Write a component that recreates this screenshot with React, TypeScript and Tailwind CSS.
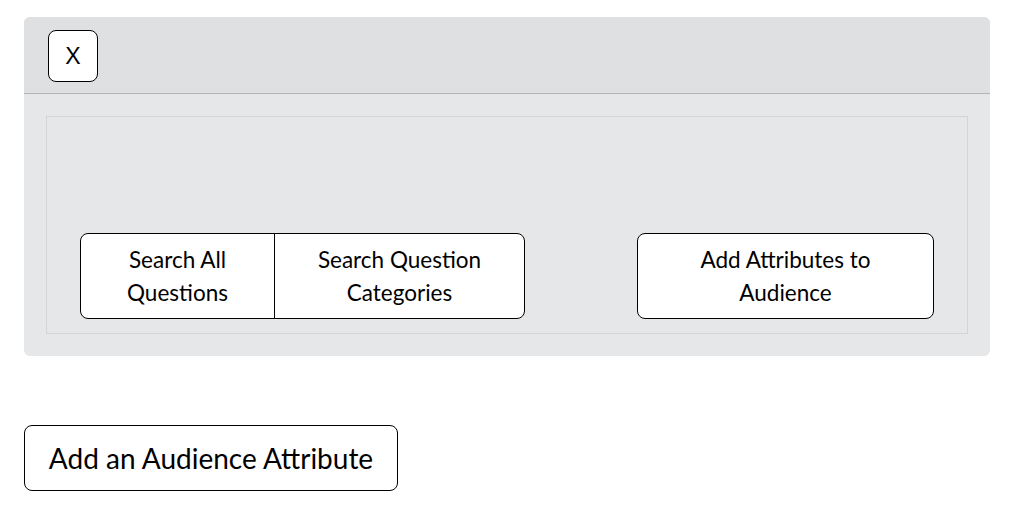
export default function App() {
  const font = { fontFamily: "Lato, 'Noto Sans', sans-serif" };
  return (
    <div className="w-[1024px] h-[507px] bg-white text-black" style={font}>
      <div className="pt-[17px] px-[24px]">
        <div className="w-[966px] h-[339px] rounded-[6px] bg-[#e6e7e8] overflow-hidden flex flex-col">
          <div className="h-[78px] bg-[#dfe0e1] border-b border-[#b4b4b4] px-[24px] pt-[13px]">
            <button className="w-[50px] h-[52px] bg-white border border-black rounded-[8px] text-[23px] leading-none flex items-center justify-center" style={{ fontFamily: "'Liberation Sans', Arial, sans-serif" }}>
              X
            </button>
          </div>
          <div className="flex-1 p-[22px] pb-[22px]">
            <div className="h-[218px] border border-[#d3d4d5] flex items-end justify-between px-[33px] pb-[14px]">
              <div className="flex h-[86px] bg-white border border-black rounded-[8px] overflow-hidden">
                <button className="w-[194px] border-r border-black text-[22.5px] leading-[33px] text-center">
                  Search All<br />Questions
                </button>
                <button className="w-[249px] text-[22.5px] leading-[33px] text-center">
                  Search Question<br />Categories
                </button>
              </div>
              <button className="w-[297px] h-[86px] bg-white border border-black rounded-[8px] text-[22.5px] leading-[33px] text-center">
                Add Attributes to<br />Audience
              </button>
            </div>
          </div>
        </div>
      </div>
      <div className="px-[24px] pt-[69px]">
        <button className="w-[374px] h-[66px] bg-white border border-black rounded-[8px] text-[28px] leading-none">
          Add an Audience Attribute
        </button>
      </div>
    </div>
  );
}
